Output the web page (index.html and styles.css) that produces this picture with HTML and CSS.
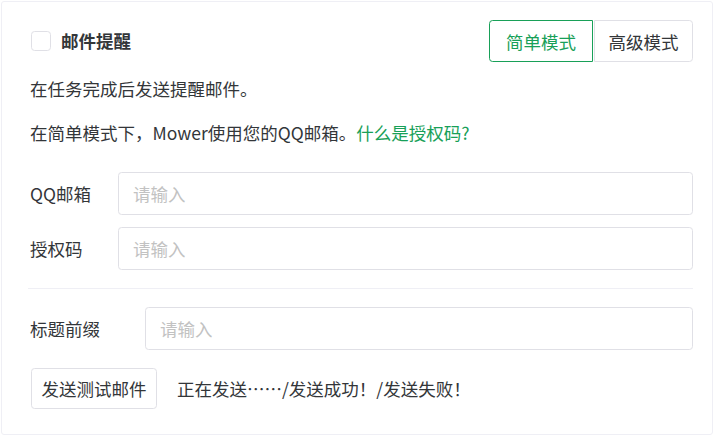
FILE: index.html
```html
<!DOCTYPE html>
<html lang="zh-CN">
<head>
<meta charset="utf-8">
<title>邮件提醒</title>
<link rel="stylesheet" href="styles.css">
</head>
<body>
<div class="page">
  <div class="card">
    <div class="header">
      <label class="check">
        <span class="box"></span>
        <span class="check-label">邮件提醒</span>
      </label>
      <div class="modes">
        <span class="mode mode-active">简单模式</span>
        <span class="mode">高级模式</span>
      </div>
    </div>
    <p class="p1">在任务完成后发送提醒邮件。</p>
    <p class="p2">在简单模式下，Mower使用您的QQ邮箱。<a class="link" href="#">什么是授权码?</a></p>
    <div class="row row-first">
      <span class="label label-short">QQ邮箱</span>
      <div class="input"><span class="ph">请输入</span></div>
    </div>
    <div class="row row-gap">
      <span class="label label-short">授权码</span>
      <div class="input"><span class="ph">请输入</span></div>
    </div>
    <div class="divider"></div>
    <div class="row row-sep">
      <span class="label label-long">标题前缀</span>
      <div class="input"><span class="ph">请输入</span></div>
    </div>
    <div class="actions">
      <span class="btn">发送测试邮件</span>
      <span class="status">正在发送……/发送成功！/发送失败！</span>
    </div>
  </div>
</div>
</body>
</html>
```

FILE: styles.css
```css
html, body {
  margin: 0;
  padding: 0;
  background: #ffffff;
}
body {
  font-family: "Noto Sans CJK SC", "Noto Sans", sans-serif;
  font-size: 17.5px;
  color: rgb(51, 54, 57);
}
.page {
  padding: 1px 1px 2px 1px;
}
.card {
  border: 1px solid #efeff5;
  border-radius: 3px;
  padding: 18px 19px 25px 28px;
}
.header {
  display: flex;
  align-items: center;
  justify-content: space-between;
  height: 42px;
}
.check {
  display: flex;
  align-items: center;
}
.box {
  width: 18px;
  height: 18px;
  border: 1px solid #e0e0e6;
  border-radius: 3.6px;
  margin-left: 1px;
  background: #fff;
}
.check-label {
  margin-left: 10px;
  font-weight: 700;
  line-height: 1;
}
.modes {
  display: flex;
  height: 42px;
}
.mode {
  display: flex;
  align-items: center;
  justify-content: center;
  box-sizing: border-box;
  height: 42px;
  border: 1px solid #e0e0e6;
  color: rgb(51, 54, 57);
}
.mode-active {
  width: 104px;
  border-color: #18a058;
  color: #18a058;
  border-radius: 3.6px 0 0 3.6px;
}
.mode:last-child {
  width: 99px;
  margin-left: 1px;
  border-radius: 0 3.6px 3.6px 0;
}
p {
  margin: 0;
  line-height: 28px;
}
.p1 {
  margin-top: 13px;
}
.p2 {
  margin-top: 16px;
}
.link {
  color: #18a058;
  text-decoration: none;
}
.row {
  display: flex;
  align-items: center;
}
.row-first {
  margin-top: 25px;
}
.row-gap {
  margin-top: 12px;
}
.row-sep {
  margin-top: 18px;
}
.label {
  flex: none;
}
.label-short {
  width: 88px;
}
.label-long {
  width: 115px;
}
.input {
  flex: 1;
  box-sizing: border-box;
  height: 43px;
  border: 1px solid #e0e0e6;
  border-radius: 3.6px;
  display: flex;
  align-items: center;
  padding-left: 14px;
}
.ph {
  color: rgb(194, 194, 194);
}
.divider {
  height: 1px;
  background: #efeff5;
  margin: 18px 0 0 -2px;
}
.actions {
  display: flex;
  align-items: center;
  margin-top: 18px;
}
.btn {
  box-sizing: border-box;
  height: 41px;
  width: 126px;
  margin-left: 1px;
  border: 1px solid #e0e0e6;
  border-radius: 3.6px;
  display: flex;
  align-items: center;
  justify-content: center;
}
.status {
  margin-left: 20px;
}
```
